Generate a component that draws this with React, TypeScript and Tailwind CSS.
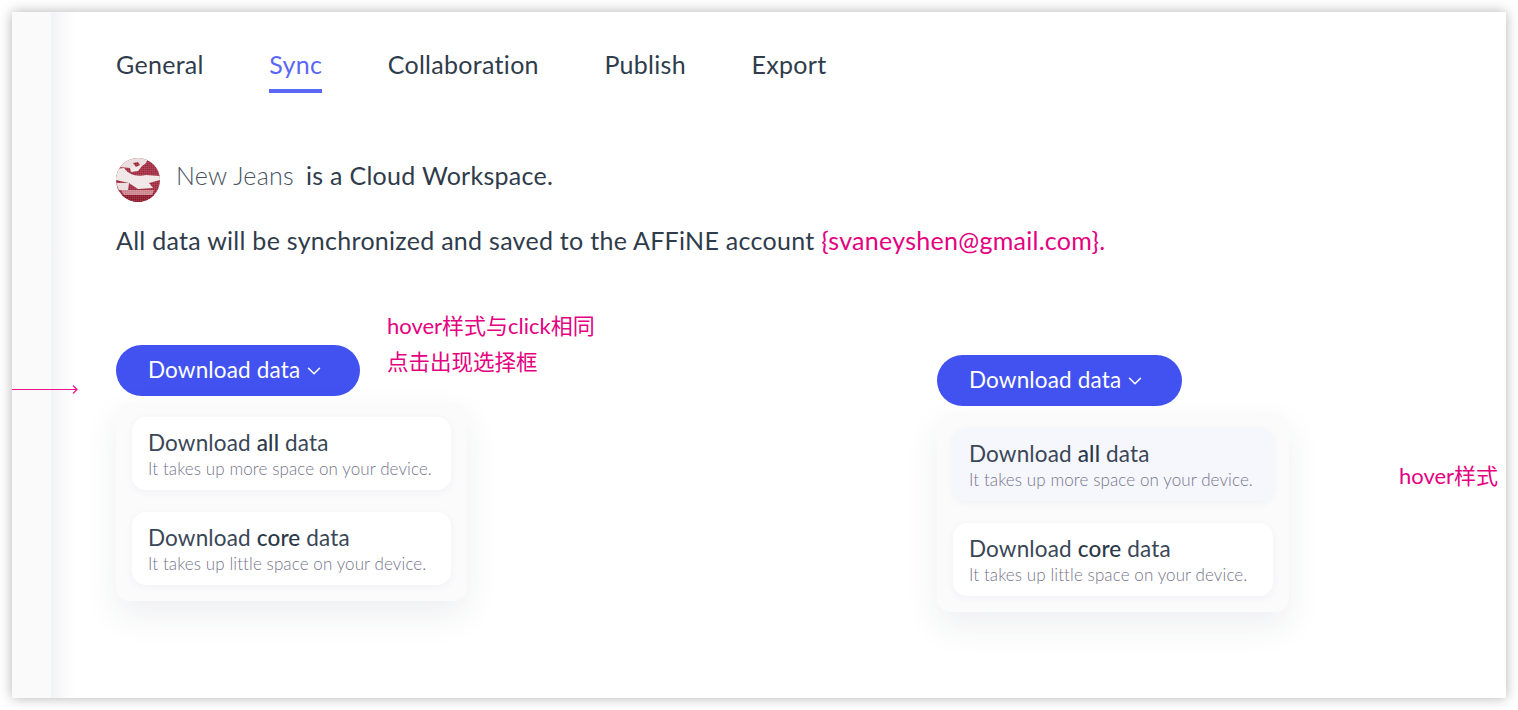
import React from 'react';
import { ChevronDown } from 'lucide-react';

const tabs = ['General', 'Sync', 'Collaboration', 'Publish', 'Export'];

function Avatar() {
  return (
    <svg width="44" height="44" viewBox="0 0 44 44" className="shrink-0">
      <defs>
        <clipPath id="round">
          <circle cx="22" cy="22" r="22" />
        </clipPath>
        <pattern id="mesh" width="2" height="2" patternUnits="userSpaceOnUse">
          <path d="M0 0H2M0 0V2" stroke="#ffffff" strokeWidth="0.5" opacity="0.4" />
        </pattern>
      </defs>
      <g clipPath="url(#round)">
        <rect width="44" height="44" fill="#9e2439" />
        <path d="M6 0H32L30 5C26 9 20 11 14 10L3 9Z" fill="#e9dcdd" />
        <path d="M0 11L8 10C13 17 21 19 30 17L44 18V22L33 25L37 30L22 31L13 25L0 22Z" fill="#efe5e5" />
        <path d="M14 10L22 6L26 8L22 13L15 14Z" fill="#f0e6e6" />
        <path d="M17 5L22 4L24 7L20 9Z" fill="#9c2335" />
        <path d="M0 25H13L12 32H3Z" fill="#e9dadb" />
        <path d="M5 32H38L36 37H8Z" fill="#c9808a" />
        <path d="M4 37H40V44H4Z" fill="#8a1024" />
        <rect width="44" height="44" fill="url(#mesh)" />
      </g>
    </svg>
  );
}

function DownloadMenu({
  hovered,
  width,
  buttonWidth,
  panelGap,
}: {
  hovered?: boolean;
  width: string;
  buttonWidth: string;
  panelGap: string;
}) {
  return (
    <div className={width}>
      <button
        className={`flex h-[51px] items-center rounded-[26px] bg-[#4152f1] pl-[32px] text-[22.5px] leading-none tracking-[0.15px] text-white ${buttonWidth}`}
      >
        Download data
        <ChevronDown className="ml-[3px] mt-[1px] h-[22px] w-[22px]" strokeWidth={1.7} />
      </button>
      <div
        className={`flex flex-col gap-[22px] rounded-[14px] bg-[#fbfbfc] px-[16px] pb-[16px] pt-[15px] shadow-[0_14px_34px_rgba(40,50,80,0.08)] ${panelGap}`}
      >
        <MenuItem label="all" hint="It takes up more space on your device." hovered={hovered} />
        <MenuItem label="core" hint="It takes up little space on your device." />
      </div>
    </div>
  );
}

function MenuItem({ label, hint, hovered }: { label: string; hint: string; hovered?: boolean }) {
  return (
    <div
      className={`h-[73px] rounded-[14px] pl-[16px] pt-[12px] shadow-[0_2px_8px_rgba(40,50,80,0.05)] ${
        hovered ? 'bg-[#f6f6fd]' : 'bg-white'
      }`}
    >
      <p className="text-[22.5px] leading-[28px] tracking-[0.15px] text-[#3a4757]">
        Download <span className="font-medium text-[#2b3848]">{label}</span> data
      </p>
      <p className="mt-[2px] text-[17px] font-light leading-[20px] tracking-[0.1px] text-[#75758a]">{hint}</p>
    </div>
  );
}

export default function App() {
  return (
    <div className="h-[710px] w-[1518px] overflow-hidden bg-white p-[12px] font-['Lato','Noto_Sans_CJK_SC',sans-serif]">
      <div className="relative flex h-[686px] w-[1494px] bg-white shadow-[0_0_12px_rgba(0,0,0,0.3)]">
        {/* side strip */}
        <div className="w-[39px] shrink-0 bg-[#fafafa]" />
        <div className="flex-1 bg-[linear-gradient(90deg,#f2f3f6_0px,#fbfbfc_14px,#ffffff_26px)] pl-[65px]">
          <nav className="flex gap-[65.5px] pt-[34px]">
            {tabs.map((tab) => (
              <div key={tab} className="flex flex-col">
                <span
                  className={`text-[25px] leading-[36px] tracking-[0.3px] ${
                    tab === 'Sync' ? 'text-[#5b67f5]' : 'text-[#2f3c4b]'
                  }`}
                >
                  {tab}
                </span>
                {tab === 'Sync' && <span className="mt-[7px] h-[4px] bg-[#5b67f5]" />}
              </div>
            ))}
          </nav>

          <div className="mt-[64px] flex items-center text-[25px] leading-[36px] tracking-[0.28px] text-[#2f3c4b]">
            <Avatar />
            <span className="mb-[10px] ml-[16px] font-light text-[#465262]">New Jeans</span>
            <span className="mb-[10px] ml-[12px]">is a Cloud Workspace.</span>
          </div>

          <p className="mt-[15px] text-[25px] leading-[44px] tracking-[0.28px] text-[#2f3c4b]">
            All data will be synchronized and saved to the AFFiNE account{' '}
            <span className="text-[#e4007f]">{'{svaneyshen@gmail.com}.'}</span>
          </p>

          <div className="mt-[83px] flex items-start">
            <DownloadMenu width="w-[351px]" buttonWidth="w-[244px]" panelGap="mt-[6px]" />
            <div className="ml-[470px] pt-[10px]">
              <DownloadMenu hovered width="w-[352px]" buttonWidth="w-[245px]" panelGap="mt-[7px]" />
            </div>
          </div>
        </div>

        {/* annotations drawn over the mockup */}
        <p className="absolute left-[375px] top-[296px] text-[22px] leading-[36px] text-[#e4007f]">
          hover样式与click相同
          <br />
          <span className="text-[21.5px]">点击出现选择框</span>
        </p>
        <p className="absolute left-[1387px] top-[446px] text-[22px] leading-[36px] text-[#e4007f]">hover样式</p>
        <svg className="absolute left-0 top-[372px]" width="68" height="12" viewBox="0 0 68 12">
          <path d="M0 5.5H65M61 1.5L65 5.5L61 9.5" fill="none" stroke="#f0108c" strokeWidth="1.2" />
        </svg>
      </div>
    </div>
  );
}
